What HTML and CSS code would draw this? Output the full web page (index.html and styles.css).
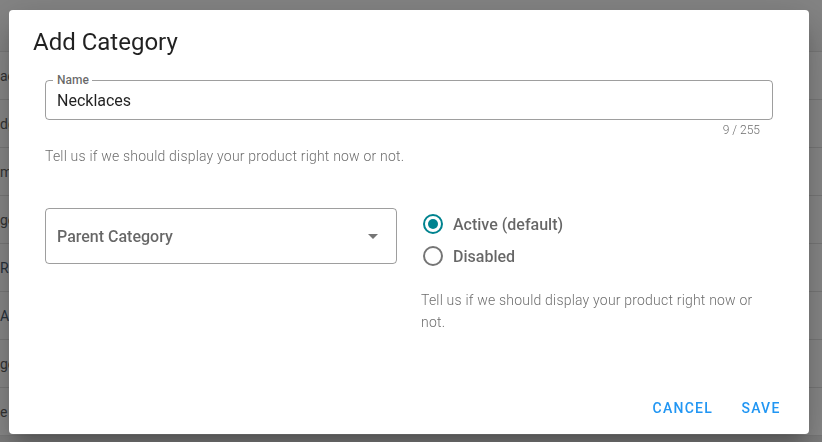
FILE: index.html
```html
<!DOCTYPE html>
<html lang="en">
<head>
<meta charset="utf-8">
<title>Add Category</title>
<link rel="stylesheet" href="styles.css">
</head>
<body>
<div class="page">
  <div class="page-head"></div>
  <div class="page-row"><span class="cell">ace</span></div>
  <div class="page-row"><span class="cell">dge</span></div>
  <div class="page-row"><span class="cell">m</span></div>
  <div class="page-row"><span class="cell">ge</span></div>
  <div class="page-row"><span class="cell link">R</span></div>
  <div class="page-row"><span class="cell link">A B</span></div>
  <div class="page-row"><span class="cell">ge</span></div>
  <div class="page-row"><span class="cell">e <span class="tag">x</span></span></div>
  <div class="page-foot"></div>
</div>

<div class="overlay">
  <div class="dialog">
    <div class="dialog-title">Add Category</div>
    <div class="dialog-body">
      <div class="field">
        <span class="field-label">Name</span>
        <span class="field-value">Necklaces</span>
      </div>
      <div class="counter">9 / 255</div>
      <p class="hint">Tell us if we should display your product right now or not.</p>

      <div class="cols">
        <div class="col">
          <div class="select">
            <span class="select-label">Parent Category</span>
            <svg class="select-arrow" width="24" height="24" viewBox="0 0 24 24"><path d="M7 10l5 5 5-5z" fill="#757575"/></svg>
          </div>
        </div>
        <div class="col">
          <div class="radio-group">
            <div class="radio">
              <svg class="radio-icon" width="24" height="24" viewBox="0 0 24 24">
                <circle cx="12" cy="12" r="9" fill="none" stroke="#00838f" stroke-width="2"/>
                <circle cx="12" cy="12" r="5" fill="#00838f"/>
              </svg>
              <span class="radio-label">Active (default)</span>
            </div>
            <div class="radio">
              <svg class="radio-icon" width="24" height="24" viewBox="0 0 24 24">
                <circle cx="12" cy="12" r="9" fill="none" stroke="#757575" stroke-width="2"/>
              </svg>
              <span class="radio-label">Disabled</span>
            </div>
          </div>
          <p class="hint hint-right">Tell us if we should display your product right now or not.</p>
        </div>
      </div>
    </div>
    <div class="actions">
      <button class="btn">Cancel</button>
      <button class="btn">Save</button>
    </div>
  </div>
</div>
</body>
</html>
```

FILE: styles.css
```css
* { box-sizing: border-box; }

html, body {
  margin: 0;
  padding: 0;
  width: 822px;
  height: 442px;
  overflow: hidden;
  font-family: Roboto, "Liberation Sans", sans-serif;
}

/* Background page (dimmed) */
.page {
  width: 822px;
  height: 442px;
  background: #8b8b8b;
  overflow: hidden;
}
.page-head {
  height: 52px;
  background: #858585;
  border-bottom: 1px solid #7b7b7b;
}
.page-row {
  height: 48px;
  border-bottom: 1px solid #7b7b7b;
  display: flex;
  align-items: center;
  font-size: 14px;
  color: #333;
}
.cell { white-space: nowrap; }
.cell.link { color: #28323c; }
.tag { background: #b07a2c; color: #b07a2c; padding: 0 6px; margin-left: 2px; }
.page-foot { height: 40px; background: #7f7f7f; }

/* Overlay + dialog */
.overlay {
  position: fixed;
  inset: 0;
  padding: 10px 0 0 9px;
}
.dialog {
  width: 800px;
  height: 424px;
  background: #fff;
  border-radius: 4px;
  display: flex;
  flex-direction: column;
  box-shadow: 0 11px 15px -7px rgba(0,0,0,.2), 0 24px 38px 3px rgba(0,0,0,.14), 0 9px 46px 8px rgba(0,0,0,.12);
}
.dialog-title {
  padding: 16px 24px 10px;
  font-size: 24px;
  line-height: 32px;
  font-weight: 400;
  color: rgba(0,0,0,.87);
}
.dialog-body {
  padding: 12px 36px 0;
}

/* Name text field */
.field {
  position: relative;
  height: 40px;
  border: 1px solid rgba(0,0,0,.38);
  border-radius: 4px;
  display: flex;
  align-items: center;
  padding: 0 11px;
}
.field-label {
  position: absolute;
  left: 7px;
  top: -8px;
  padding: 0 3px 0 4px;
  background: #fff;
  font-size: 12px;
  line-height: 14px;
  font-weight: 500;
  color: rgba(0,0,0,.6);
}
.field-value {
  font-size: 16px;
  color: rgba(0,0,0,.87);
}
.counter {
  margin-top: 2px;
  padding-right: 13px;
  text-align: right;
  font-size: 12px;
  line-height: 16px;
  font-weight: 300;
  color: rgba(0,0,0,.6);
}
.hint {
  margin: 7px 0 0;
  font-size: 14px;
  line-height: 22px;
  font-weight: 300;
  letter-spacing: 0.2px;
  color: rgba(0,0,0,.6);
}

/* Two columns */
.cols {
  margin-top: 41px;
  display: grid;
  grid-template-columns: 1fr 1fr;
  column-gap: 24px;
}
.select {
  height: 56px;
  border: 1px solid rgba(0,0,0,.38);
  border-radius: 4px;
  display: flex;
  align-items: center;
  justify-content: space-between;
  padding: 0 11px;
}
.select-label {
  font-size: 16px;
  font-weight: 500;
  color: rgba(0,0,0,.6);
}
.select-arrow { display: block; }

.radio-group { margin-top: 4px; }
.radio {
  height: 24px;
  display: flex;
  align-items: center;
  gap: 8px;
}
.radio + .radio { margin-top: 8px; }
.radio-icon { display: block; flex: none; }
.radio-label {
  font-size: 16px;
  font-weight: 500;
  color: rgba(0,0,0,.6);
}
.hint-right {
  margin-top: 21px;
  max-width: 340px;
}

/* Actions */
.actions {
  margin-top: auto;
  padding: 8px 16px 8px;
  display: flex;
  justify-content: flex-end;
  gap: 8px;
}
.btn {
  height: 36px;
  min-width: 64px;
  padding: 0 8px;
  border: 0;
  background: none;
  font-family: Roboto, "Liberation Sans", sans-serif;
  font-size: 14px;
  font-weight: 500;
  letter-spacing: 1.25px;
  text-transform: uppercase;
  color: #2196f3;
  cursor: pointer;
}
```
